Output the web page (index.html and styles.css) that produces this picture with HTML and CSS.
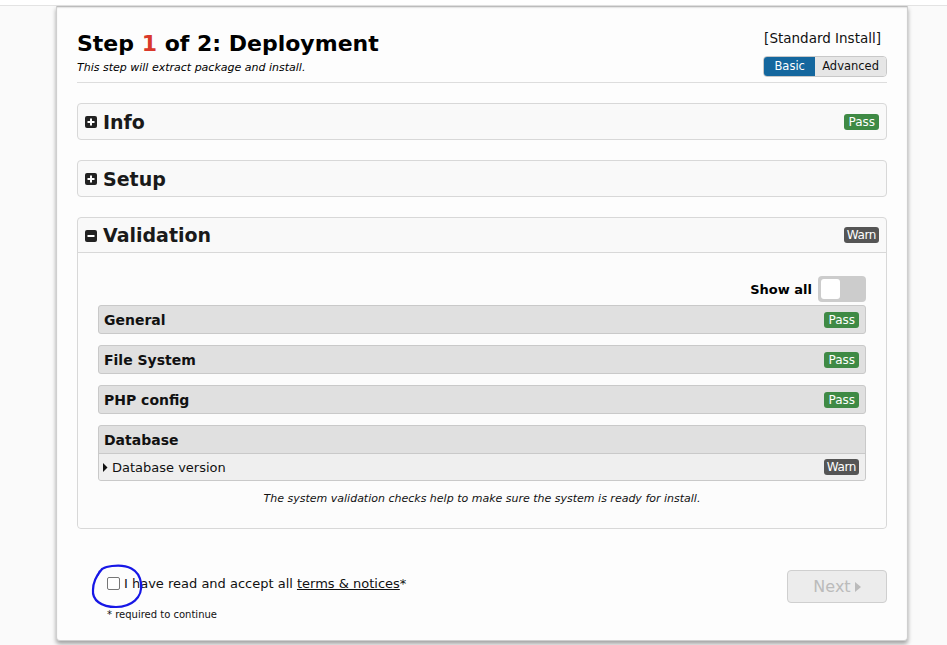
FILE: index.html
```html
<!DOCTYPE html>
<html>
<head>
<meta charset="utf-8">
<link rel="stylesheet" href="styles.css">
</head>
<body>
<div class="topbar"></div>
<div class="page">
  <div class="header">
    <div class="head-left">
      <h1 class="title">Step <span class="step-num">1</span> of 2: Deployment</h1>
      <div class="subtitle">This step will extract package and install.</div>
    </div>
    <div class="head-right">
      <div class="mode">[Standard Install]</div>
      <div class="btn-group">
        <span class="seg seg-active">Basic</span><span class="seg">Advanced</span>
      </div>
    </div>
  </div>

  <div class="panel">
    <div class="panel-head">
      <span class="sq-icon"><svg width="12" height="12" viewBox="0 0 12 12"><rect width="12" height="12" rx="2" fill="#222"/><path d="M5 2.5h2v2.5h2.5v2H7v2.5H5V7H2.5V5H5z" fill="#fff"/></svg></span>
      <span class="panel-title">Info</span>
      <span class="badge pass">Pass</span>
    </div>
  </div>

  <div class="panel">
    <div class="panel-head">
      <span class="sq-icon"><svg width="12" height="12" viewBox="0 0 12 12"><rect width="12" height="12" rx="2" fill="#222"/><path d="M5 2.5h2v2.5h2.5v2H7v2.5H5V7H2.5V5H5z" fill="#fff"/></svg></span>
      <span class="panel-title">Setup</span>
    </div>
  </div>

  <div class="panel">
    <div class="panel-head open">
      <span class="sq-icon"><svg width="12" height="12" viewBox="0 0 12 12"><rect width="12" height="12" rx="2" fill="#222"/><rect x="2.5" y="5" width="7" height="2" fill="#fff"/></svg></span>
      <span class="panel-title">Validation</span>
      <span class="badge warn">Warn</span>
    </div>
    <div class="panel-body">
      <div class="show-all">
        <span class="show-label">Show all</span>
        <span class="switch"><span class="knob"></span></span>
      </div>
      <div class="row">
        <div class="row-head"><span class="row-title">General</span><span class="badge pass">Pass</span></div>
      </div>
      <div class="row">
        <div class="row-head"><span class="row-title">File System</span><span class="badge pass">Pass</span></div>
      </div>
      <div class="row">
        <div class="row-head"><span class="row-title">PHP config</span><span class="badge pass">Pass</span></div>
      </div>
      <div class="row">
        <div class="row-head"><span class="row-title">Database</span></div>
        <div class="row-sub">
          <span class="caret"><svg width="5" height="9" viewBox="0 0 5 9"><path d="M0 0L4.5 4.5L0 9z" fill="#111"/></svg></span>
          <span class="sub-title">Database version</span>
          <span class="badge warn">Warn</span>
        </div>
      </div>
      <div class="note">The system validation checks help to make sure the system is ready for install.</div>
    </div>
  </div>

  <div class="footer">
    <div class="accept">
      <label class="accept-line"><span class="checkbox"></span>I have read and accept all <span class="terms">terms &amp; notices</span>*</label>
      <div class="required">* required to continue</div>
      <svg class="scribble" width="60" height="50" viewBox="88 562 60 50"><path d="M97 575 C99 569, 103 567, 111 566 C126 564, 138 569, 140 583 C142 598, 130 607, 115 607 C100 607, 91 600, 92 590 C92 582, 95 576, 101 569" fill="none" stroke="#1717e6" stroke-width="2.2" stroke-linecap="round"/></svg>
    </div>
    <button class="next" disabled>Next <svg width="6" height="10" viewBox="0 0 6 10"><path d="M0 0L6 5L0 10z" fill="#bbb"/></svg></button>
  </div>
</div>
</body>
</html>
```
FILE: styles.css
```css
* { box-sizing: border-box; }
html, body { margin: 0; padding: 0; }
body {
  background: #fafafa;
  font-family: "DejaVu Sans", Verdana, sans-serif;
  color: #000;
  overflow: hidden;
  height: 645px;
}
.topbar {
  height: 6px;
  background: #fff;
  border-bottom: 1px solid #e3e3e3;
}
.page {
  margin-left: 56px;
  width: 852px;
  background: #fdfdfd;
  border: 1px solid #cfcfcf;
  border-top: none;
  border-radius: 0 0 4px 4px;
  box-shadow: inset 0 2px 2px -1px rgba(0,0,0,0.35), 0 3px 4px rgba(0,0,0,0.35);
  padding: 24px 20px 20px;
  height: 635px;
}
.header {
  display: flex;
  justify-content: space-between;
  align-items: flex-start;
  border-bottom: 1px solid #ddd;
  padding-bottom: 5px;
}
.title {
  margin: 0;
  font-size: 22px;
  font-weight: bold;
  line-height: 28px;
}
.step-num { color: #d9392b; }
.subtitle {
  font-size: 11px;
  font-style: italic;
  line-height: 14px;
  margin-top: 3px;
}
.head-right {
  display: flex;
  flex-direction: column;
  align-items: flex-end;
  padding-top: 0;
}
.mode {
  font-size: 13.5px;
  line-height: 16px;
  margin-right: 6px;
  color: #111;
}
.btn-group {
  display: flex;
  margin-top: 10px;
  border: 1px solid #c8c8c8;
  border-radius: 4px;
  overflow: hidden;
  height: 21px;
}
.seg {
  font-size: 11.5px;
  line-height: 19px;
  padding: 0 7px;
  background: #e6e6e6;
  color: #111;
}
.seg-active {
  background: #14679e;
  color: #fff;
  width: 51px;
  text-align: center;
  padding: 0;
}
.panel {
  margin-top: 20px;
  border: 1px solid #d8d8d8;
  border-radius: 4px;
  background: #f9f9f9;
}
.panel-head {
  display: flex;
  align-items: center;
  height: 35px;
  padding: 0 7px;
}
.panel-head.open {
  border-bottom: 1px solid #d8d8d8;
}
.sq-icon { display: flex; margin-right: 6px; margin-top: 1px; }
.panel-title {
  font-size: 19px;
  font-weight: bold;
  color: #1a1a1a;
  flex: 1;
}
.badge {
  font-size: 12px;
  line-height: 16px;
  height: 16px;
  padding: 0 4px;
  border-radius: 3px;
  color: #fff;
}
.badge.pass { background: #3f8a45; }
.badge.warn { background: #555; letter-spacing: -0.4px; padding: 0 3px; }
.panel-body {
  padding: 23px 20px 23px;
  background: #fcfcfc;
  border-radius: 0 0 4px 4px;
}
.show-all {
  display: flex;
  justify-content: flex-end;
  align-items: center;
  margin-bottom: 3px;
}
.show-label {
  font-size: 13px;
  font-weight: bold;
  margin-right: 6px;
}
.switch {
  width: 48px;
  height: 26px;
  background: #ccc;
  border-radius: 4px;
  padding: 3px;
  display: flex;
}
.knob {
  width: 19px;
  height: 20px;
  background: #fff;
  border-radius: 3px;
}
.row {
  border: 1px solid #c9c9c9;
  border-radius: 3px;
  background: #e0e0e0;
  margin-bottom: 11px;
  overflow: hidden;
}
.row-head {
  display: flex;
  align-items: center;
  height: 27px;
  padding: 0 6px 0 5px;
}
.row-title {
  flex: 1;
  font-size: 14px;
  font-weight: bold;
  color: #111;
}
.row-sub {
  display: flex;
  align-items: center;
  height: 27px;
  padding: 0 6px 0 4px;
  background: #efefef;
  border-top: 1px solid #c9c9c9;
}
.caret { display: flex; margin-right: 4px; }
.sub-title { flex: 1; font-size: 13px; color: #111; }
.note {
  text-align: center;
  font-size: 11px;
  font-style: italic;
  color: #111;
  margin-top: 7px;
}
.footer {
  display: flex;
  justify-content: space-between;
  align-items: flex-start;
  margin-top: 40px;
  padding-left: 30px;
}
.accept { position: relative; padding-top: 7px; }
.accept-line {
  display: flex;
  align-items: center;
  font-size: 13px;
  color: #111;
}
.checkbox {
  width: 13px;
  height: 13px;
  border: 1px solid #767676;
  border-radius: 2px;
  background: #fff;
  margin-right: 4px;
}
.terms { text-decoration: underline; margin-left: 4px; }
.required {
  font-size: 10px;
  margin-top: 18px;
  color: #111;
}
.scribble {
  position: absolute;
  left: -18px;
  top: -7px;
}
.next {
  margin-top: 1px;
  width: 100px;
  height: 33px;
  border: 1px solid #cfcfcf;
  border-radius: 4px;
  background: #ececec;
  color: #bbb;
  font-family: "DejaVu Sans", Verdana, sans-serif;
  font-size: 16px;
  display: flex;
  align-items: center;
  justify-content: center;
  gap: 4px;
  padding: 0;
}
```
